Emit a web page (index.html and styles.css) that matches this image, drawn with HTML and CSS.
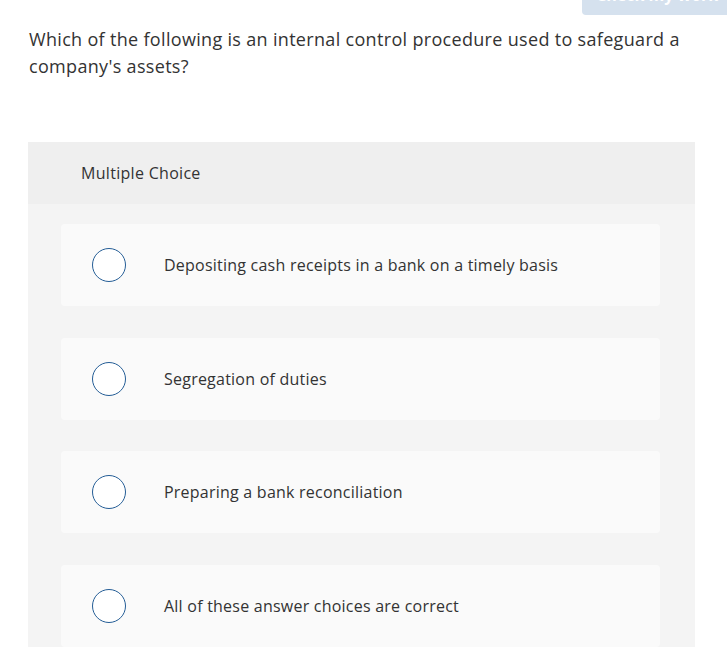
FILE: index.html
```html
<!DOCTYPE html>
<html lang="en">
<head>
<meta charset="utf-8">
<title>Multiple Choice</title>
<link rel="stylesheet" href="styles.css">
</head>
<body>
<div class="page">
  <div class="topbar"><button class="check-btn">Check my work</button></div>
  <p class="question">Which of the following is an internal control procedure used to safeguard a company's assets?</p>
  <section class="card">
    <header class="card-head">Multiple Choice</header>
    <div class="card-body">
      <label class="option"><span class="radio"></span><span class="opt-text">Depositing cash receipts in a bank on a timely basis</span></label>
      <label class="option"><span class="radio"></span><span class="opt-text">Segregation of duties</span></label>
      <label class="option"><span class="radio"></span><span class="opt-text">Preparing a bank reconciliation</span></label>
      <label class="option"><span class="radio"></span><span class="opt-text">All of these answer choices are correct</span></label>
    </div>
  </section>
</div>
</body>
</html>
```
FILE: styles.css
```css
html, body {
  margin: 0;
  padding: 0;
  background: #ffffff;
}
body {
  font-family: "Open Sans", "Liberation Sans", sans-serif;
  color: #333333;
  overflow: hidden;
}
.page {
  width: 727px;
  height: 654px;
}
.topbar {
  display: flex;
  justify-content: flex-end;
  height: 15px;
  overflow: hidden;
}
.check-btn {
  width: 145px;
  height: 40px;
  margin-top: -25px;
  background: #d5e1ee;
  color: #ffffff;
  border: none;
  border-radius: 0 0 0 4px;
  font-family: inherit;
  font-size: 16px;
  font-weight: 700;
  padding: 0 0 0 14px;
  text-align: left;
  white-space: nowrap;
}
.question {
  margin: 11px 0 0 29px;
  width: 680px;
  font-size: 18px;
  line-height: 27px;
  letter-spacing: 0.32px;
}
.card {
  margin: 62px 0 0 28px;
  width: 667px;
  background: #f4f4f4;
}
.card-head {
  height: 62px;
  background: #efefef;
  display: flex;
  align-items: center;
  padding-left: 53px;
  font-size: 16px;
  letter-spacing: 0.3px;
}
.card-body {
  padding: 20px 35px 0 33px;
  display: flex;
  flex-direction: column;
  gap: 31.7px;
}
.option {
  height: 82px;
  background: #fafafa;
  border-radius: 4px;
  display: flex;
  align-items: center;
  padding-left: 31px;
}
.radio {
  width: 32px;
  height: 32px;
  border: 1.5px solid #245d96;
  border-radius: 50%;
  background: #ffffff;
  flex: none;
}
.opt-text {
  margin-left: 38px;
  font-size: 16px;
  letter-spacing: 0.23px;
}
```
